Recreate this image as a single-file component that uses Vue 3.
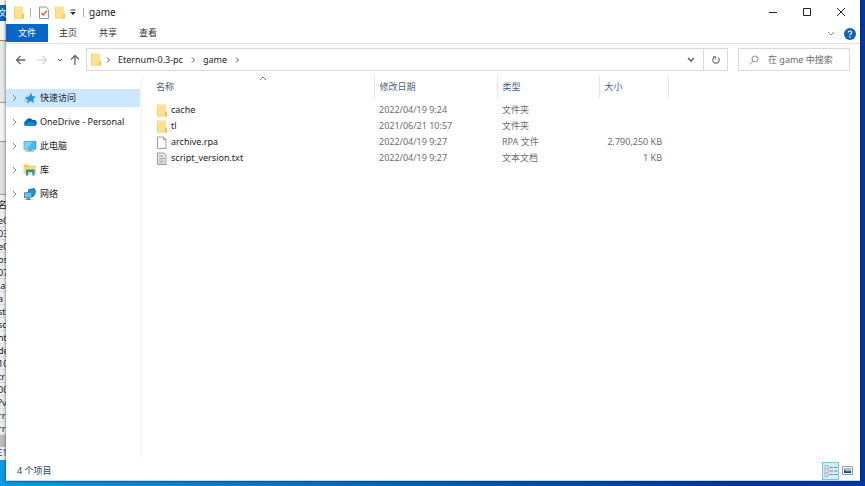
<script setup>
import { ref } from 'vue'

const query = ref('')
const tabs = ['主页', '共享', '查看']
const crumbs = ['Eternum-0.3-pc', 'game']
const places = [
  { icon: 'star', label: '快速访问', active: true },
  { icon: 'cloud', label: 'OneDrive - Personal' },
  { icon: 'pc', label: '此电脑' },
  { icon: 'library', label: '库' },
  { icon: 'network', label: '网络' },
]
const files = [
  { icon: 'folder', name: 'cache', date: '2022/04/19 9:24', type: '文件夹', size: '' },
  { icon: 'folder', name: 'tl', date: '2021/06/21 10:57', type: '文件夹', size: '' },
  { icon: 'blank', name: 'archive.rpa', date: '2022/04/19 9:27', type: 'RPA 文件', size: '2,790,250 KB' },
  { icon: 'text', name: 'script_version.txt', date: '2022/04/19 9:27', type: '文本文档', size: '1 KB' },
]
const behind = ['eC', '03', 'eC', 'os', '07', 'la', 'a', 'sti', 'sc', 'nt', 'de', '10', 'tr', '00', '?v', 'rr', 'rr']
</script>

<template>
  <div class="desktop">
    <svg class="defs" aria-hidden="true">
      <symbol id="folder" viewBox="0 0 12 13">
        <path d="M1 .5h9v7.500l.800 .500V12.500H1z" fill="#fde293" />
        <path d="M1 .5h1v12H1z" fill="#f7d470" />
        <path d="M1 11.500h9.800v1H1z" fill="#f6d47a" />
        <path d="M8.800 9l1-1.500h1.200v5H8.800z" fill="#efc65f" />
      </symbol>
      <symbol id="blank" viewBox="0 0 12 13">
        <path d="M1.500 1H7.500L10 3.500V12.500H1.500z" fill="#fff" stroke="#858585" stroke-width=".8" />
        <path d="M7.500 1v2.500H10" fill="none" stroke="#858585" stroke-width=".8" />
      </symbol>
      <symbol id="text" viewBox="0 0 12 13">
        <path d="M1.500 1H8L10 3V12.500H1.500z" fill="#f1f1f1" stroke="#858585" stroke-width=".8" />
        <path d="M3 3.500h4M3 5h5.500M3 6.500h5.500M3 8h5.500M3 9.500h5.500M3 11h5.500" stroke="#999" stroke-width=".7" />
      </symbol>
      <symbol id="star" viewBox="0 0 14 14">
        <path d="M8.300 1.800L9.300 5.200 13 5.400 10.200 8 11 12 7.500 10 3.800 12.800 4.800 9 2 6.300 6 5.600z" fill="#2a8fdc" />
        <path d="M1 8.500h2.500M1.500 10.500h2M4 4h1.500" stroke="#77b9ea" stroke-width=".8" />
      </symbol>
      <symbol id="cloud" viewBox="0 0 14 14">
        <path d="M3.300 11A2.800 2.800 0 0 1 2.800 5.700A4 4 0 0 1 9.700 5A3 3 0 0 1 11.500 11z" fill="#0a63b8" />
        <path d="M3.300 11Q1.500 11 .8 9.500L8 6.300l5.500 3.200Q13 11 11.300 11z" fill="#1789dc" />
      </symbol>
      <symbol id="pc" viewBox="0 0 14 14">
        <path d="M.7 2.200h12.600v8.300H.7z" fill="#337da8" />
        <path d="M1.300 2.800h11.400v7.100H1.300z" fill="#42bdf3" />
        <path d="M1.300 2.800h8L4 9.900H1.300z" fill="#78d5fb" />
        <path d="M5.500 10.500h3v1h-3zM2.500 11.500h9v1h-9z" fill="#7595a6" />
      </symbol>
      <symbol id="library" viewBox="0 0 14 14">
        <path d="M.8 1.500h4.500l1 1.500h6.500v8H.8z" fill="#f2c94f" />
        <path d="M.8 4h12v7H.8z" fill="#fbdd77" />
        <path d="M3 6h8.500v6.500H9.300V9H5.200v3.500H3z" fill="#2f8fb7" />
        <path d="M3 6h8.500v1H3z" fill="#67bedb" />
      </symbol>
      <symbol id="network" viewBox="0 0 14 14">
        <path d="M5 2.500L11 1q2.500 2 1.800 4.500T10 10L5 9.500z" fill="#226f9e" />
        <path d="M6 3.300L10.800 2.200q1.500 2 1 3.500T9 9L6 8.700z" fill="#2993cb" />
        <path d="M1 5.500l8-1v6l-8 .8z" fill="#2580b4" />
        <path d="M1.600 6.200l6.800-.8v4.500l-6.800.6z" fill="#5fc2ef" />
        <path d="M4 11h3v1H4zM2.500 12h5.500v1H2.500z" fill="#6889a0" />
      </symbol>
    </svg>

    <aside class="back-window" aria-hidden="true">
      <div class="back-top"></div>
      <div class="back-tab">文</div>
      <div class="back-tools"></div>
      <div class="back-band"></div>
      <div class="back-search"></div>
      <div class="back-panel"></div>
      <div class="back-head">名</div>
      <div v-for="(t, i) in behind" :key="i" class="back-row">{{ t }}</div>
      <div class="back-scroll"></div>
      <div class="back-status">E1</div>
    </aside>

    <main class="window">
      <header class="titlebar">
        <svg class="file-icon"><use href="#folder" /></svg>
        <span class="divider"></span>
        <button class="quick" aria-label="属性">
          <svg width="12" height="13" viewBox="0 0 12 13">
            <path d="M1.500 1H8L10.500 3.500V12.500H1.500z" fill="#fafafa" stroke="#8b8b8b" stroke-width=".9" />
            <path d="M3.500 7L5.300 9L9 4.700" fill="none" stroke="#d95f3b" stroke-width="1.300" />
          </svg>
        </button>
        <button class="quick" aria-label="新建文件夹"><svg class="file-icon"><use href="#folder" /></svg></button>
        <button class="quick narrow" aria-label="自定义快速访问工具栏">
          <svg width="6" height="8" viewBox="0 0 6 8"><path d="M.5 2h5" stroke="#333" /><path d="M.3 4h5.400L3 7z" fill="#222" /></svg>
        </button>
        <span class="divider"></span>
        <h1 class="title">game</h1>
        <div class="controls">
          <button aria-label="最小化"><svg width="10" height="10" viewBox="0 0 10 10"><path d="M1 5.500h8" stroke="#222" /></svg></button>
          <button aria-label="最大化"><svg width="10" height="10" viewBox="0 0 10 10"><path d="M1.500 1.500h7v7h-7z" fill="none" stroke="#222" /></svg></button>
          <button aria-label="关闭"><svg width="10" height="10" viewBox="0 0 10 10"><path d="M1 1l8 8M9 1l-8 8" stroke="#222" /></svg></button>
        </div>
      </header>

      <nav class="ribbon">
        <button class="tab file">文件</button>
        <button v-for="t in tabs" :key="t" class="tab">{{ t }}</button>
        <div class="ribbon-end">
          <button aria-label="展开功能区"><svg width="8" height="6" viewBox="0 0 8 6"><path d="M1 1l3 3 3-3" fill="none" stroke="#999" /></svg></button>
          <button aria-label="帮助">
            <svg width="12" height="12" viewBox="0 0 12 12">
              <circle cx="6" cy="6" r="6" fill="#0d65b3" />
              <path d="M4.300 4.600Q4.300 3 6 3T7.700 4.500Q7.700 5.300 6.700 5.900T6 7.300" fill="none" stroke="#fff" stroke-width="1.200" />
              <circle cx="6" cy="9" r=".8" fill="#fff" />
            </svg>
          </button>
        </div>
      </nav>

      <div class="location">
        <div class="history">
          <button aria-label="后退"><svg width="12" height="12" viewBox="0 0 12 12"><path d="M10.500 6H2M5.500 2L1.500 6l4 4" fill="none" stroke="#666" stroke-width="1.300" /></svg></button>
          <button aria-label="前进" disabled><svg width="12" height="12" viewBox="0 0 12 12"><path d="M1 6h9M6.500 2l4 4-4 4" fill="none" stroke="#d2d2d2" stroke-width="1.200" /></svg></button>
          <button class="slim" aria-label="最近浏览的位置"><svg width="6" height="6" viewBox="0 0 6 6"><path d="M.8 1.800L3 4l2.200-2.200" fill="none" stroke="#666" /></svg></button>
          <button aria-label="上移"><svg width="12" height="12" viewBox="0 0 12 12"><path d="M6 11V2M2 5.500l4-4 4 4" fill="none" stroke="#666" stroke-width="1.300" /></svg></button>
        </div>
        <div class="address">
          <svg class="file-icon"><use href="#folder" /></svg>
          <svg class="crumb-arrow first" viewBox="0 0 6 8"><path d="M2 1.500L4.500 4 2 6.500" fill="none" stroke="#555" /></svg>
          <template v-for="c in crumbs" :key="c">
            <a href="#" class="crumb">{{ c }}</a>
            <svg class="crumb-arrow" viewBox="0 0 6 8"><path d="M2 1.500L4.500 4 2 6.500" fill="none" stroke="#555" /></svg>
          </template>
          <button class="drop" aria-label="以前的位置"><svg width="8" height="6" viewBox="0 0 8 6"><path d="M1 1l3 3 3-3" fill="none" stroke="#555" stroke-width="1.300" /></svg></button>
          <button class="refresh" aria-label="刷新">
            <svg width="10" height="10" viewBox="0 0 10 10"><path d="M3 2.400A3.200 3.200 0 1 0 7 2.400M2 1.700h2.300V4" fill="none" stroke="#666" stroke-width="1.100" /></svg>
          </button>
        </div>
        <label class="search">
          <svg width="10" height="10" viewBox="0 0 10 10"><circle cx="6" cy="4" r="3" fill="none" stroke="#888" stroke-width=".9" /><path d="M4 6.200L.7 9.500" stroke="#888" /></svg>
          <input v-model="query" type="text" placeholder="在 game 中搜索" aria-label="在 game 中搜索" />
        </label>
      </div>

      <div class="content">
        <nav class="sidebar">
          <a v-for="p in places" :key="p.label" href="#" class="place" :class="{ active: p.active }">
            <svg class="expand" viewBox="0 0 6 8"><path d="M1 1l3 3-3 3" fill="none" stroke="#8a8a8a" /></svg>
            <svg class="place-icon"><use :href="'#' + p.icon" /></svg>
            <span>{{ p.label }}</span>
          </a>
        </nav>
        <section class="list">
          <table>
            <colgroup><col class="c-name" /><col class="c-date" /><col class="c-type" /><col class="c-size" /><col /></colgroup>
            <thead>
              <tr>
                <th>名称<svg class="sort" viewBox="0 0 8 5"><path d="M1 4l3-3 3 3" fill="none" stroke="#777" /></svg></th>
                <th>修改日期</th><th>类型</th><th>大小</th><td></td>
              </tr>
            </thead>
            <tbody>
              <tr v-for="f in files" :key="f.name">
                <td><span class="name"><svg class="file-icon"><use :href="'#' + f.icon" /></svg>{{ f.name }}</span></td>
                <td>{{ f.date }}</td>
                <td>{{ f.type }}</td>
                <td class="size">{{ f.size }}</td>
                <td></td>
              </tr>
            </tbody>
          </table>
        </section>
      </div>

      <footer class="status">
        <span>4 个项目</span>
        <div class="views">
          <button class="view on" aria-label="详细信息">
            <svg width="14" height="14" viewBox="0 0 14 14">
              <path d="M1 1.500h3v11H1z" fill="#e8eef0" stroke="#9aa5a8" stroke-width=".8" />
              <path d="M1.500 5h2M1.500 9h2" stroke="#c08a80" />
              <path d="M5.500 3.500h3.500M10 3.500h3.500M5.500 7h3.500M10 7h3.500M5.500 10.500h3.500M10 10.500h3.500" stroke="#7b8c93" />
            </svg>
          </button>
          <button class="view" aria-label="大图标">
            <svg width="11" height="9" viewBox="0 0 11 9">
              <path d="M.5.500h10v8H.5z" fill="#fff" stroke="#9b9b9b" />
              <path d="M2 2h7v5H2z" fill="#8cc4e8" /><path d="M2 4l3 1.500L9 5v2H2z" fill="#25496b" />
            </svg>
          </button>
        </div>
      </footer>
    </main>
  </div>
</template>

<style>
body { margin: 0; }
</style>

<style scoped>
* { box-sizing: border-box; }
.desktop {
  display: grid;
  grid-template-columns: 6px minmax(0, 1fr);
  min-height: 100vh;
  padding: 0 5px 5px 0;
  overflow: hidden;
  background: linear-gradient(90deg, #0c9be0 0%, #0a7fcc 25%, #0552ac 60%, #0337a0 85%, #0338a2 100%);
  font: 9px/12px "Noto Sans", "Noto Sans CJK SC", sans-serif;
  color: #1c1c1c;
}
.defs { position: absolute; width: 0; height: 0; }
button { border: 0; padding: 0; background: none; font: inherit; color: inherit; display: flex; align-items: center; justify-content: center; }
a { color: inherit; text-decoration: none; }
svg { display: block; flex: none; }
.file-icon { width: 12px; height: 13px; }

.back-window { align-self: start; overflow: hidden; background: #eeeff1; white-space: nowrap; text-indent: -2px; }
.back-top { height: 5px; background: #f4f4f4; }
.back-tab { height: 16px; line-height: 16px; background: #0a61ba; color: #fff; }
.back-tools { height: 20px; border-bottom: 1px solid #888; background: #f4f4f4; }
.back-band { height: 62px; border-bottom: 1px solid #999; background: #e6e7e9; }
.back-search { height: 39px; border-bottom: 1px solid #999; background: #f3f3f3; }
.back-panel { height: 53px; border-bottom: 1px solid #999; background: #dfe0e2; }
.back-head { height: 19px; line-height: 20px; }
.back-row { height: 13px; line-height: 13px; border-bottom: 1px solid #dcdde0; }
.back-scroll { height: 12px; background: #bdbdbf; }
.back-status { height: 13px; font-size: 8px; color: #335; }

.window { display: flex; flex-direction: column; min-width: 0; background: #fff; box-shadow: 0 0 3px rgba(0, 20, 60, .7); border-bottom: 1px solid #b9dcf2; }
.titlebar { display: flex; align-items: center; height: 24px; padding: 0 2px 0 7px; }
.divider { width: 1px; height: 9px; margin: 0 5px; background: #aaa; }
.quick { width: 16px; height: 17px; }
.quick.narrow { width: 10px; }
.title { margin: 0; font-size: 10px; font-weight: 400; }
.controls { display: flex; margin-left: auto; }
.controls button { width: 34px; height: 24px; }

.ribbon { display: flex; height: 20px; border-bottom: 1px solid #dfe1e4; }
.tab { width: 40px; height: 18px; color: #333; }
.tab.file { width: 42px; background: #0867c6; color: #fff; }
.ribbon-end { display: flex; align-items: center; gap: 9px; margin-left: auto; padding-right: 4px; }

.location { display: flex; align-items: center; padding: 4px 10px 4px 4px; }
.history { display: flex; width: 76px; }
.history button { width: 22px; height: 22px; }
.history .slim { width: 10px; margin: 0 0 0 3px; }
.address { display: flex; flex: 1; min-width: 0; align-items: center; height: 23px; padding-left: 3px; border: 1px solid #d9d9d9; }
.crumb-arrow { width: 6px; height: 8px; margin: 0 7px; }
.crumb-arrow.first { margin-left: 3px; }
.drop { width: 24px; height: 21px; margin-left: auto; }
.refresh { width: 24px; height: 21px; border-left: 1px solid #d9d9d9; }
.search { display: flex; align-items: center; gap: 9px; width: 112px; height: 23px; margin-left: 10px; padding-left: 10px; border: 1px solid #d9d9d9; }
.search input { flex: 1; min-width: 0; border: 0; padding: 0; outline: 0; background: none; font: inherit; color: #333; }
.search input::placeholder { color: #6a6a6a; opacity: 1; }

.content { display: flex; flex: 1; padding-top: 1px; }
.sidebar { display: flex; flex-direction: column; gap: 6px; width: 136px; padding: 13px 1px 0 0; border-right: 1px solid #f3f3f3; }
.place { display: flex; align-items: center; height: 18px; padding-left: 6px; white-space: nowrap; }
.place.active { background: #cce8ff; }
.expand { width: 6px; height: 8px; margin-right: 5px; }
.place-icon { width: 14px; height: 14px; margin-right: 3px; }
.list { flex: 1; min-width: 0; padding-left: 7px; }
table { width: 100%; table-layout: fixed; border-collapse: collapse; }
.c-name { width: 225px; }
.c-date { width: 123px; }
.c-type { width: 102px; }
.c-size { width: 69px; }
th { position: relative; height: 22px; padding: 0 5px; border-right: 1px solid #e5e5e5; font-weight: 400; text-align: left; color: #4c607a; }
th:first-child { padding-left: 7px; }
.sort { position: absolute; top: 0; left: 49%; width: 8px; height: 5px; }
tbody::before { content: ""; display: block; height: 4px; }
tbody td { height: 16px; padding: 0 6px 0 5px; color: #6d6d6d; }
tbody td:first-child { padding-left: 7px; color: #1c1c1c; }
.name { display: flex; align-items: center; gap: 3px; }
td.size { text-align: right; }

.status { display: flex; align-items: center; justify-content: space-between; height: 19px; padding: 0 6px 0 11px; color: #26425f; }
.views { display: flex; gap: 1px; }
.view { width: 14px; height: 18px; }
.view.on { width: 17px; border: 1px solid #7cc4e8; background: #cfeefb; }
</style>
